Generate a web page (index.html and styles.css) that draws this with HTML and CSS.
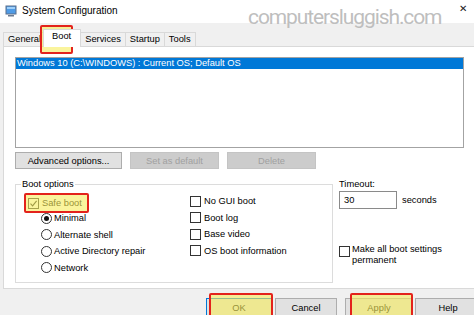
FILE: index.html
```html
<!DOCTYPE html>
<html lang="en">
<head>
<meta charset="utf-8">
<title>System Configuration</title>
<link rel="stylesheet" href="styles.css">
</head>
<body>
<div class="window">
  <header class="titlebar">
    <svg class="app-icon" viewBox="0 0 12 12" width="12" height="12" aria-hidden="true">
      <rect x="0.5" y="0.5" width="11" height="9" fill="#5b6f8c"/>
      <rect x="1.5" y="1.5" width="9" height="7" fill="#4f9be6"/>
      <rect x="2" y="2" width="8" height="2" fill="#9fd0fb"/>
      <rect x="3" y="10" width="6" height="1.5" fill="#6b7a90"/>
    </svg>
    <span class="title">System Configuration</span>
    <span class="close">&#x2715;</span>
    <span class="watermark">computersluggish.com</span>
  </header>

  <nav class="tabs">
    <span class="tab">General</span>
    <span class="tab active">Boot</span>
    <span class="tab">Services</span>
    <span class="tab">Startup</span>
    <span class="tab">Tools</span>
  </nav>

  <section class="panel">
    <div class="oslist">
      <div class="os-item selected">Windows 10 (C:\WINDOWS) : Current OS; Default OS</div>
    </div>

    <div class="btnrow">
      <span class="btn w-adv">Advanced options...</span>
      <span class="btn disabled w-mid">Set as default</span>
      <span class="btn disabled w-mid">Delete</span>
    </div>

    <div class="options">
      <fieldset class="group">
        <legend>Boot options</legend>
        <div class="group-cols">
          <div class="col col-left">
            <div class="row row-first"><span class="box checked"><svg viewBox="0 0 9 9" width="9" height="9"><path d="M1.5 4.6 L3.6 6.8 L7.6 1.8" fill="none" stroke="#222" stroke-width="1.1"/></svg></span><span>Safe boot</span></div>
            <div class="row indent"><span class="radio on"></span><span>Minimal</span></div>
            <div class="row indent"><span class="radio"></span><span>Alternate shell</span></div>
            <div class="row indent"><span class="radio"></span><span>Active Directory repair</span></div>
            <div class="row indent"><span class="radio"></span><span>Network</span></div>
          </div>
          <div class="col col-right">
            <div class="row"><span class="box"></span><span>No GUI boot</span></div>
            <div class="row"><span class="box"></span><span>Boot log</span></div>
            <div class="row"><span class="box"></span><span>Base video</span></div>
            <div class="row"><span class="box"></span><span>OS boot information</span></div>
          </div>
        </div>
      </fieldset>

      <div class="side">
        <div class="label">Timeout:</div>
        <div class="timeout">
          <span class="input">30</span>
          <span>seconds</span>
        </div>
        <div class="permanent">
          <span class="box"></span>
          <span class="perm-text">Make all boot settings permanent</span>
        </div>
      </div>
    </div>
  </section>

  <footer class="actions">
    <span class="btn big default w-ok">OK</span>
    <span class="btn big w-cancel">Cancel</span>
    <span class="btn big w-apply">Apply</span>
    <span class="btn big w-help">Help</span>
  </footer>

  <span class="mark mark-tab"></span>
  <span class="mark mark-safe"></span>
  <span class="mark mark-ok"></span>
  <span class="mark mark-apply"></span>
</div>
</body>
</html>
```

FILE: styles.css
```css
* { box-sizing: border-box; }

body {
  margin: 0;
  width: 474px;
  height: 315px;
  overflow: hidden;
  background: #f0f0f0;
  font-family: "Liberation Sans", Arial, sans-serif;
  font-size: 9.3px;
  color: #000;
}

.window {
  position: relative;
  width: 474px;
  height: 315px;
}

/* title bar */
.titlebar {
  position: relative;
  height: 23px;
  background: #fff;
  display: flex;
  align-items: center;
  padding-left: 5px;
}
.app-icon { margin-right: 5px; margin-top: -2px; }
.title { font-size: 10px; margin-top: -3px; }
.close {
  margin-left: auto;
  margin-right: 7px;
  margin-top: -6px;
  font-size: 10px;
  color: #222;
}
.watermark {
  position: absolute;
  left: 248px;
  top: 5px;
  font-family: Roboto, "Liberation Sans", sans-serif;
  font-size: 21px;
  line-height: 24px;
  color: #bebebe;
  letter-spacing: -1.1px;
}

/* tabs */
.tabs {
  height: 23px;
  display: flex;
  align-items: flex-end;
  padding-left: 3px;
}
.tab {
  height: 14px;
  line-height: 13px;
  padding: 0 4px;
  border: 1px solid #d9d9d9;
  border-bottom: none;
  background: #f0f0f0;
  margin-right: -1px;
}
.tab.active {
  position: relative;
  z-index: 1;
  height: 18px;
  line-height: 12px;
  margin: 0 -1px -1px -2px;
  padding: 0 9px 0 8px;
  background: #fff;
}

/* main panel */
.panel {
  height: 243px;
  margin: 0 -3px 0 3px;
  border: 1px solid #d9d9d9;
  background: #fff;
  padding: 10px 11px 0 11px;
}

.oslist {
  width: 449px;
  height: 91px;
  border: 1px solid #a3a3a3;
}
.os-item {
  height: 11px;
  line-height: 11px;
  padding-left: 1px;
  white-space: nowrap;
}
.os-item.selected { background: #0078d7; color: #fff; }

.btnrow {
  display: flex;
  gap: 8px;
  margin-top: 4px;
}
.btn {
  display: flex;
  align-items: center;
  justify-content: center;
  height: 17px;
  border: 1px solid #adadad;
  background: #e1e1e1;
  white-space: nowrap;
}
.btn.disabled {
  background: #cccccc;
  border-color: #c4c4c4;
  color: #a0a0a0;
}
.w-adv { width: 107px; }
.w-mid { width: 89px; }

/* boot options */
.options {
  display: flex;
  gap: 6px;
  margin-top: 9px;
}
.group {
  margin: 0;
  width: 318px;
  height: 105px;
  padding: 2px 0 0 12px;
  border: 1px solid #dcdcdc;
  min-width: 0;
}
.group legend {
  margin-left: -7px;
  padding: 0 1px;
  line-height: 13px;
}
.group-cols {
  display: grid;
  grid-template-columns: 162px 1fr;
}
.col-left { padding-top: 3px; }
.row {
  display: flex;
  align-items: center;
  gap: 3px;
  height: 16.5px;
  white-space: nowrap;
}
.row-first { height: 14px; }
.indent { padding-left: 13px; gap: 2px; }

.box {
  flex: none;
  width: 11px;
  height: 11px;
  border: 1px solid #333;
  background: #fff;
  display: flex;
  align-items: center;
  justify-content: center;
}
.radio {
  flex: none;
  width: 11px;
  height: 11px;
  border: 1px solid #333;
  border-radius: 50%;
  background: #fff;
  display: flex;
  align-items: center;
  justify-content: center;
}
.radio.on::after {
  content: "";
  width: 5px;
  height: 5px;
  border-radius: 50%;
  background: #111;
}

/* side column */
.side {
  display: flex;
  flex-direction: column;
}
.label { line-height: 12px; }
.timeout {
  display: flex;
  align-items: center;
  gap: 5px;
  margin-top: 1px;
}
.input {
  width: 58px;
  height: 18px;
  border: 1px solid #8a8a8a;
  background: #fff;
  padding-left: 4px;
  line-height: 16px;
}
.permanent {
  display: flex;
  align-items: flex-start;
  gap: 2px;
  margin-top: 35px;
}
.permanent .box { margin-top: 2px; }
.perm-text { width: 100px; line-height: 10.5px; }

/* footer buttons */
.actions {
  display: flex;
  padding: 9px 0 0 206px;
}
.btn.big {
  flex: none;
  height: 23px;
  align-items: flex-start;
  padding-top: 4px;
}
.btn.default { border-color: #0078d7; }
.w-ok { width: 66px; }
.w-cancel { width: 62px; margin-left: 3px; }
.w-apply { width: 68px; margin-left: 8px; }
.w-help { width: 66px; margin-left: 2px; }

/* annotation highlights */
.mark {
  position: absolute;
  border: 2px solid #e3231c;
  border-radius: 2px;
  background: rgba(246, 236, 92, 0.6);
}
.mark-tab { left: 40px; top: 25px; width: 33px; height: 29px; }
.mark-safe { left: 24px; top: 193px; width: 65px; height: 20px; }
.mark-ok { left: 209px; top: 293px; width: 64px; height: 26px; }
.mark-apply { left: 350px; top: 293px; width: 63px; height: 26px; }
```
